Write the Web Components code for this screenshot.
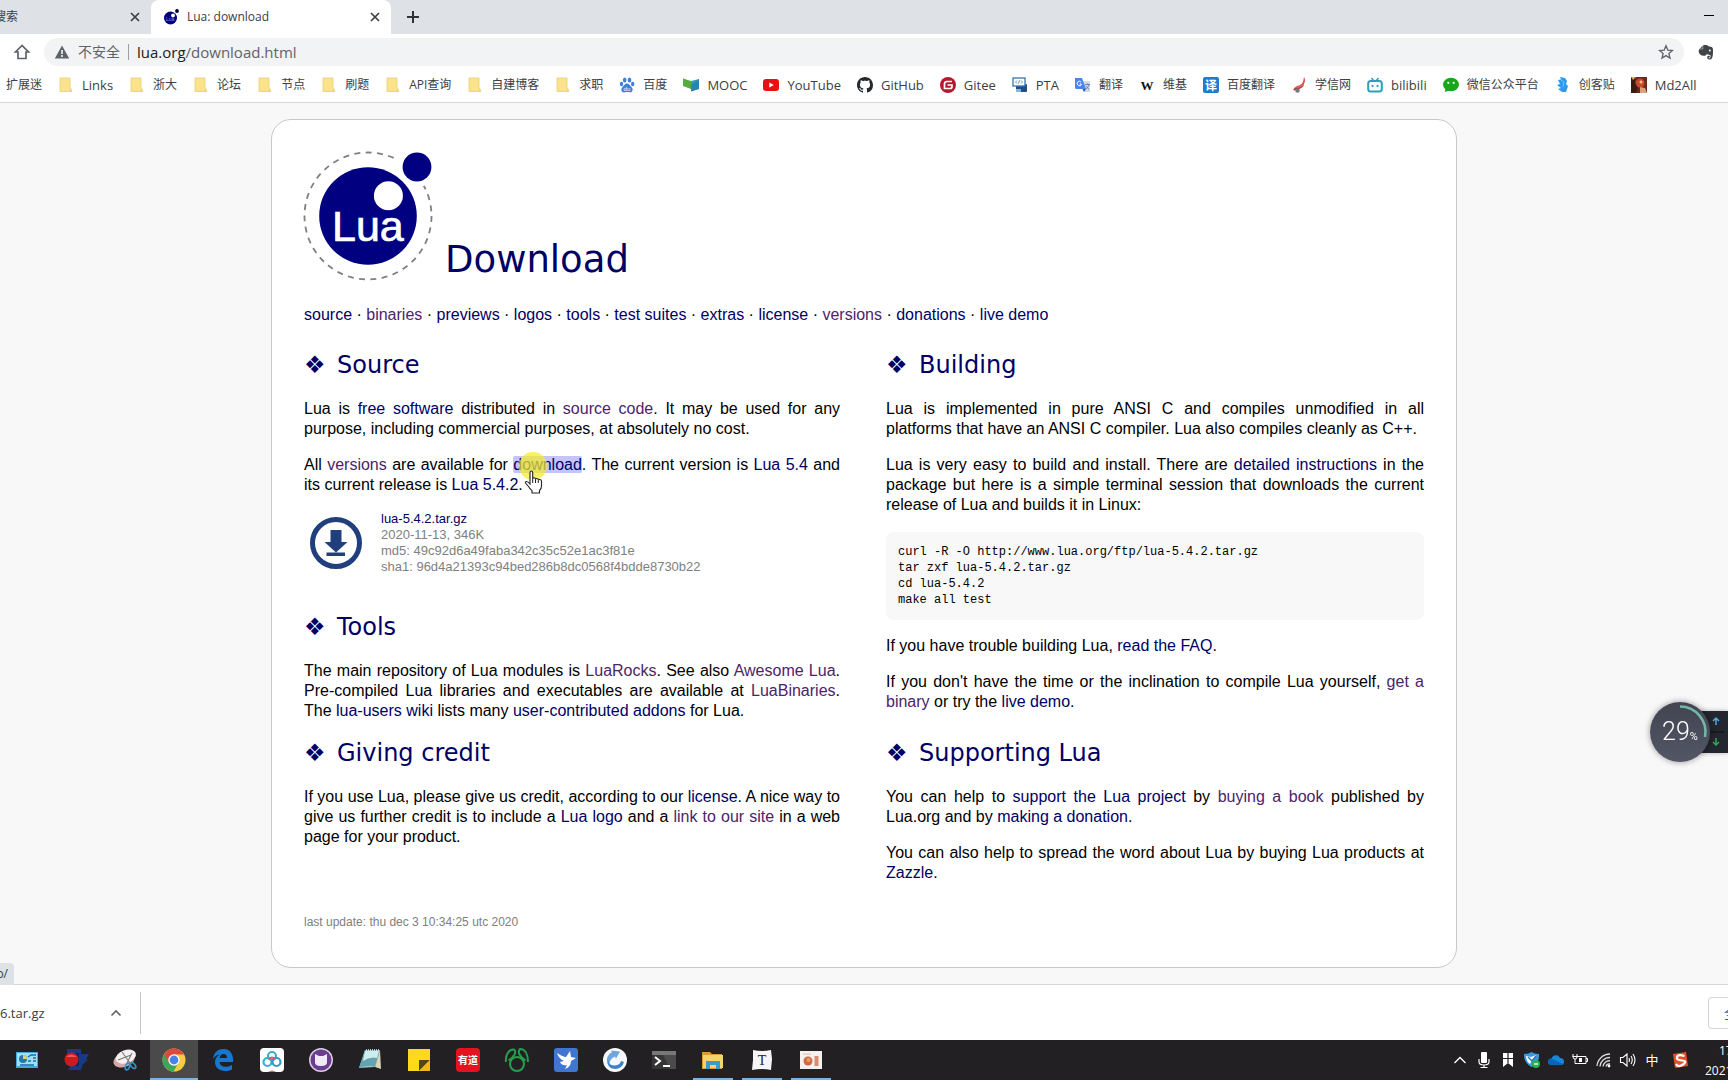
<!DOCTYPE html>
<html lang="zh-CN">
<head>
<meta charset="utf-8">
<title>Lua: download</title>
<style>
  body {
    margin: 0;
    min-height: 100vh;
    display: flex;
    flex-direction: column;
    overflow: hidden;
    background: #fff;
    color: #3c4043;
    font: 12px/16px "Open Sans", "Noto Sans CJK SC", sans-serif;
  }
  lua-page { flex: 1; }
</style>
</head>
<body>
<tab-strip></tab-strip>
<address-bar></address-bar>
<bookmarks-bar></bookmarks-bar>
<lua-page></lua-page>
<download-shelf></download-shelf>
<task-bar></task-bar>
<speed-ball></speed-ball>

<script>
const ICONS = {
  close: '<path d="M4 4l8 8M12 4l-8 8" stroke="#3c4043" stroke-width="1.7"/>',
  plus: '<path d="M8 2v12M2 8h12" stroke="#303336" stroke-width="2"/>',
  minimize: '<path d="M3 6.500h10" stroke="#000"/>',
  lua: '<circle cx="7.500" cy="9" r="6.500" fill="#000080"/><circle cx="10" cy="6.500" r="1.900" fill="#fff"/><circle cx="14" cy="2" r="1.900" fill="#000030"/><text x="3" y="12" font-size="5" fill="#99c" font-family="Liberation Sans">Lua</text>',
  home: '<path d="M8 1.500L1.500 8H4v6.500h8V8h2.500z" fill="none" stroke="#5f6368" stroke-width="1.700"/>',
  warn: '<path d="M8 1.500L15.200 14.500H.8z" fill="#5f6368"/><path d="M8 6v4M8 11v2" stroke="#fff" stroke-width="1.500"/>',
  star: '<path d="M8 1.800l1.800 4.300 4.600.4-3.500 3 1.100 4.600L8 11.600l-4 2.500 1.100-4.600-3.500-3 4.600-.4z" fill="none" stroke="#5f6368" stroke-width="1.300"/>',
  evernote: '<path d="M1 5.500L5 1.500c3-1 5 0 6 1 3 0 4 1 4 3.500 0 4 0 9-2.500 9.500-2 .3-3.500-.5-3.300-2.200.2-1.500 1.800-1.700 2.600-1.300v1.200c-.9-.1-1.300.2-1.200.8.2.6 1.200.5 1.600-.2.500-1 .4-2.500 0-3-1 .5-2.500 0-3.200-1-.8 1.800-2 2.200-3.500 2C2 11.400 0 9 1 5.500z" fill="#404447"/><path d="M4.800 2v3H1.500" stroke="#f1f3f4" stroke-width=".5" fill="none"/><circle cx="11.800" cy="6.500" r=".9" fill="#fff"/>',
  folder: '<path d="M2 1h10v9l2 4.500H2z" fill="#fbe38e" stroke="#e8ce74" stroke-width=".8"/><path d="M11 14.500l1.500-4 1.500 4z" fill="#f4d775"/>',
  baidu: '<g fill="#3b82e0"><ellipse cx="5.700" cy="3" rx="1.800" ry="2.500"/><ellipse cx="10.500" cy="3" rx="1.800" ry="2.500"/><ellipse cx="2.500" cy="7" rx="1.700" ry="2.200"/><ellipse cx="13.700" cy="7" rx="1.700" ry="2.200"/><path d="M8 6.500c2 0 3 2 4.500 3.500 2.300 2.300.8 5.500-1.500 5.500-1.200 0-1.800-.4-3-.4s-1.800.4-3 .4c-2.300 0-3.800-3.200-1.500-5.500C5 8.500 6 6.500 8 6.500z"/></g><text x="4.600" y="14" font-size="6" fill="#fff" font-family="Liberation Sans">du</text>',
  mooc: '<path d="M0 1.500l8 2.500v8l-8-3z" fill="#53ad3c"/><path d="M8 4l8-2v10l-8 2.500z" fill="#3a9bc0"/><path d="M8 8l8-6v10l-8 2.500z" fill="#25759d" opacity=".6"/>',
  youtube: '<rect y="2" width="16" height="12" rx="3" fill="#e81010"/><path d="M6.300 5.500v5l4.500-2.500z" fill="#fff"/>',
  github: '<path fill="#24292e" d="M8 0C3.580 0 0 3.580 0 8c0 3.540 2.290 6.530 5.470 7.590.4.07.55-.17.55-.38 0-.19-.01-.82-.01-1.490-2.010.37-2.530-.49-2.690-.94-.09-.23-.48-.94-.82-1.130-.28-.15-.68-.52-.01-.53.63-.01 1.080.58 1.230.82.72 1.210 1.870.87 2.330.66.07-.52.28-.87.51-1.070-1.780-.2-3.640-.89-3.640-3.950 0-.87.31-1.590.82-2.150-.08-.2-.36-1.020.08-2.120 0 0 .67-.21 2.200.82.64-.18 1.320-.27 2-.27s1.360.09 2 .27c1.530-1.040 2.200-.82 2.200-.82.44 1.100.16 1.920.08 2.120.51.56.82 1.270.82 2.150 0 3.070-1.870 3.750-3.650 3.950.29.25.54.73.54 1.480 0 1.070-.01 1.930-.01 2.200 0 .21.15.46.55.38A8.010 8.010 0 0016 8c0-4.420-3.580-8-8-8z"/>',
  gitee: '<circle cx="8" cy="8" r="8" fill="#b5192f"/><path d="M12 4.500H7Q4.500 4.500 4.500 7v4.500H10Q12 11.500 12 9.500V8H7.500" stroke="#fff" stroke-width="1.700" fill="none"/>',
  pta: '<rect x="4" y="7" width="11" height="8" rx="1" fill="#1f4f8a"/><rect x="1" y="1" width="12" height="8" fill="#fff" stroke="#3b74a8" stroke-width="1.300"/><path d="M5 3.500L3.500 5 5 6.500M9 3.500L10.500 5 9 6.500M7.500 3.300l-1 3.400" stroke="#3b74a8" fill="none" stroke-width=".8"/><path d="M4 12h5v3H4z" fill="#8db4d6"/>',
  gtranslate: '<path d="M6 4h9v11H9z" fill="#d8dce2"/><path d="M0 1h7l4 11H1.500Q0 12 0 10.500z" fill="#4a86e8"/><path d="M7.500 12H11l-2 3z" fill="#2a56c6"/><path d="M6 5A2.200 2.200 0 1 0 6.500 7H4.700" stroke="#fff" stroke-width="1" fill="none"/><path d="M10 7.500h5M12.500 6.500v1M14 7.500c-.5 2.500-2 4-3.500 5M11.300 9c1 1.800 2 2.700 3 3.300" stroke="#5b7db5" stroke-width=".9" fill="none"/>',
  wiki: '<text x="8" y="13" text-anchor="middle" font-size="13" font-weight="bold" fill="#111" font-family="Liberation Serif">W</text>',
  fanyi: '<rect width="16" height="16" rx="2" fill="#1f7bd0"/><text x="8" y="12.500" text-anchor="middle" font-size="12" font-weight="bold" fill="#fff" font-family="Noto Sans CJK SC">译</text>',
  chsi: '<path d="M13 0c2 3 1 6-1 8-2 2-5 2-9 6-1-4 3-5 6-6 2.500-1 3-3 4-8z" fill="#e05a52"/><path d="M13 5c0 4-3 5-11 7l1 1c4-1 11-1 10-8z" fill="#b62f38"/><circle cx="6.500" cy="13.500" r="2.200" fill="#777"/>',
  bilibili: '<rect x="1.200" y="4" width="13.600" height="10.500" rx="2.500" fill="none" stroke="#2d9fb8" stroke-width="2"/><path d="M4.500 1l2 2.500M11.500 1l-2 2.500" stroke="#2d9fb8" stroke-width="1.500"/><path d="M5.500 8v2M10.500 8v2" stroke="#2d9fb8" stroke-width="1.800"/>',
  wechat: '<ellipse cx="8" cy="7.500" rx="8" ry="6.800" fill="#17a81a"/><path d="M2.500 11L2 15l4-1.500z" fill="#17a81a"/><circle cx="5.300" cy="5.800" r="1.100" fill="#fff"/><circle cx="10.700" cy="5.800" r="1.100" fill="#fff"/>',
  ckt: '<path d="M5 0l5 1 2 3-1 3 2 2-2 6H7l-4-3 3-1-4-3 3-1-2-4 3-.5z" fill="#2b9af0"/><path d="M6 3l3 2-1 5" stroke="#74c3ff" fill="none"/>',
  md: '<path d="M0 0h16v16H0z" fill="#6a2a1c"/><circle cx="9" cy="6" r="4.500" fill="#c94a2a"/><path d="M0 0h4v6l3 5-2 5H0z" fill="#3a1c14"/><path d="M9 10l5 1 2 5H9z" fill="#d8a27a"/><circle cx="10" cy="5" r="1.500" fill="#f0c0a0"/><path d="M0 0h5l-3 3z" fill="#d3b23a"/>',
  up: '<path d="M3.500 10.500L8 6l4.500 4.500" fill="none" stroke="#5f6368" stroke-width="1.600"/>',

  panel: '<rect x="1" y="4" width="22" height="16" fill="#41a9dc"/><rect x="2" y="5" width="20" height="13" fill="#9fe0f8"/><circle cx="8" cy="11" r="4" fill="#2578b5"/><path d="M8 11V7a4 4 0 0 1 4 4z" fill="#e7ce68"/><path d="M13 9l3-2h5M13 13h3M18 10h3M18 13h3M5 17h14" stroke="#1a6ca8" stroke-width="1.500" fill="none"/>',
  recorder: '<path d="M3 1h14v5h8l-3 5 2 1-5 4-2 6H4l3-5H2V7h1z" fill="#183a86"/><path d="M5 5h10v13H5z" fill="#0d2460"/><circle cx="7.500" cy="11.500" r="7" fill="#c81c20"/><path d="M2 9q5-5 11 0z" fill="#ea5b55"/>',
  snip: '<ellipse cx="11" cy="12" rx="11" ry="7" transform="rotate(-20 11 12)" fill="#d8a9a8"/><ellipse cx="13" cy="8.500" rx="10.500" ry="6.500" transform="rotate(-20 13 9)" fill="#f6efef"/><path d="M9 4l8 11M19 5l-5 10M5 12l13-5" stroke="#777" stroke-width="1.100"/><ellipse cx="14.500" cy="18.500" rx="2" ry="3.500" transform="rotate(20 14.500 18.500)" fill="none" stroke="#398fbd" stroke-width="1.700"/><ellipse cx="20" cy="17.500" rx="2" ry="3.500" transform="rotate(-40 20 17.500)" fill="none" stroke="#398fbd" stroke-width="1.700"/>',
  chrome: '<circle cx="12" cy="12" r="11.500" fill="#f7cb42"/><path d="M2 6.200A11.500 11.500 0 0 0 11.500 23.500l5-9L12 12z" fill="#3da55c"/><path d="M2 6.200A11.500 11.500 0 0 1 22.100 6.500H12l-5 8z" fill="#dc4a3d"/><circle cx="12" cy="12" r="5.700" fill="#fff"/><circle cx="12" cy="12" r="4.400" fill="#4a82e8"/>',
  edge: '<path d="M2 11C3 4 7 1 12.500 1 19 1 22 6 22 11v3H8.500c.3 3 2.500 4.800 6 4.800 2.500 0 4.500-.6 6.500-1.800v4.500C19 22.600 16.500 23 14 23 8 23 4 19.500 4 14c0-3.500 2-6.200 5-7.500C5.500 7 3.300 8.800 2 11zm6.600-1H16c0-2.500-1-4-3.500-4-2.300 0-3.600 1.700-3.900 4z" fill="#1876ce"/>',
  netdisk: '<rect width="24" height="24" rx="4" fill="#fff"/><circle cx="12" cy="8" r="4" fill="none" stroke="#38afd0" stroke-width="2.200"/><circle cx="7.500" cy="14" r="4" fill="none" stroke="#38afd0" stroke-width="2.200"/><circle cx="16.500" cy="14" r="4" fill="none" stroke="#2d9ac5" stroke-width="2.200"/><path d="M9 11.500q3-4 6 0" fill="none" stroke="#df5268" stroke-width="2.200"/><path d="M8 24q4-3 8 0z" fill="#e85a68"/>',
  githubdesk: '<circle cx="12" cy="12" r="12" fill="#d9cde4"/><circle cx="12" cy="12" r="10.500" fill="#6a3d91"/><path d="M6 6l4 2h4l4-2v7q1 5-6 5t-6-5z" fill="#f2e9f8"/>',
  notepad: '<path d="M7 2h15l-5 17-16 1z" fill="#8fc8d2"/><path d="M7 2h15l-5 17q-6-3-16 1z" fill="#65a3ae"/><path d="M7 3h14l-2 7q-7-2-14 3z" fill="#cdeef0"/><path d="M22 2l1 19-6-2z" fill="#d8d5bb"/><path d="M8 2h14" stroke="#eee" stroke-width="1.500" stroke-dasharray="1 1"/>',
  sticky: '<path d="M1 1h22v22H1z" fill="#ffd91c"/><path d="M12 23V12h11z" fill="#51451a"/><path d="M12 23l11-11v11z" fill="#f0b913"/>',
  youdao: '<rect width="24" height="24" rx="4" fill="#e5121f"/><text x="12" y="16" text-anchor="middle" font-size="10" font-weight="bold" fill="#fff" font-family="Noto Sans CJK SC">有道</text>',
  clover: '<g fill="none" stroke="#25a04c" stroke-width="2"><circle cx="12" cy="16" r="7"/><path d="M1 14C0 7 4 1 9 1.500 12 4 9 9 3.500 12.500M23 14C23 6 20 1 15 1c-3 3 0 8 5.500 11.500"/></g>',
  bird: '<rect width="24" height="24" rx="3" fill="#3f76d2"/><path d="M3 5q6 4 9 4L16 3l1 6 5 1-5 3q0 6-6 8l2-4q-5 1-7-3l4-1Q5 11 3 5z" fill="#fff"/>',
  swirl: '<circle cx="12" cy="12" r="12" fill="#f5f8fc"/><path d="M4.500 16Q2 8 9 4l-1-1.500 9 1-4 7-1-2Q6 11 6.500 17z" fill="#6fa6df"/><path d="M5 11q0 7 7 6.500 5-.5 6-4.500l3 1q-2 7-9 7-9-.5-7-10z" fill="#3c80c8"/>',
  terminal: '<path d="M0 3h24v18H0z" fill="#353535"/><path d="M0 3h24v4H0z" fill="#777"/><path d="M11 7h13v14H18z" fill="#4b4b4b"/><path d="M3 9l5 4-5 4M11 18h7" stroke="#fff" stroke-width="2" fill="none"/>',
  explorer: '<path d="M1 4h8l2 2h10v15H1z" fill="#d99b2b"/><path d="M2 7h20v13H2z" fill="#f7d36d"/><path d="M5 13h14v8h-4v-4H9v4H5z" fill="#3d9bc8"/>',
  typora: '<path d="M3 2q9 2 18 0l1 9-1 11q-9-2-19 0l1-10z" fill="#f6f6f6"/><text x="12" y="17" text-anchor="middle" font-size="14" fill="#222" font-family="Liberation Serif">T</text>',
  ppt: '<path d="M1 3h22v18H1z" fill="#f5f1ef"/><circle cx="9" cy="13" r="4.500" fill="#d06a48"/><circle cx="9.500" cy="12" r="2" fill="#e8a24f"/><path d="M15.500 8h4v10h-4z" fill="#d98d70"/><path d="M4 6h8" stroke="#ddbbb0"/>',

  trayup: '<path d="M2.500 11L8 5.500l5.500 5.500" fill="none" stroke="#fff" stroke-width="1.300"/>',
  mic: '<rect x="5" y="0" width="6" height="11" rx="1" fill="#fff"/><path d="M3 7v3q0 3 5 3t5-3V7M8 13v2.500M4.500 15.500h7" fill="none" stroke="#fff" stroke-width="1.200"/>',
  flag: '<path d="M3 1h10v14l-5-4-5 4z" fill="#fff"/><path d="M8 0v11M2 6.500h12" stroke="#222022" stroke-width="1.200"/>',
  shield: '<path d="M0 2q5 0 7.500-2 3 2 7.500 2 1 9-7.500 13Q-.5 11 0 2z" fill="#3a9ad9"/><path d="M2 4l5 1 5-2q-1 3-4 5l-2 4Q2 9 2 4z" fill="#fff"/><path d="M4 5l4 4 4-5" stroke="#2a77c8" fill="none" stroke-width="1.500"/><circle cx="12" cy="12" r="4" fill="#27b34b"/><path d="M10 12h4" stroke="#fff" stroke-width="1.300"/>',
  cloud: '<path d="M3 13q-3-.5-3-3.500Q.5 6.500 3.500 6.500 5 3 8.500 3.300 11 3.500 12 6q4 0 4 3.500T13 13z" fill="#1687d9"/><path d="M3 6.500L15 12q-1 1-2 1H3q-3-.5-3-3.500Q.5 6.500 3 6.500z" fill="#0866b8"/>',
  battery: '<path d="M4.500 4.500H14v7H5.500M14 6.500h1.500v3H14M1 2v3q0 2 2 2t2-2V2M.5 4.500h5M3 7v4.500h2.500" fill="none" stroke="#fff"/><path d="M7 6h3v4H7z" fill="#fff"/>',
  wifi: '<g fill="none" stroke="#ddd" stroke-width="1.300"><path d="M1 14A13 13 0 0 1 14 2"/><path d="M4 14.500A9.500 9.500 0 0 1 14 5.500"/><path d="M7 14.500A6.500 6.500 0 0 1 14 8.800"/><path d="M10 14.500A3.500 3.500 0 0 1 14 12"/></g><circle cx="13" cy="14" r="1.400" fill="#fff"/>',
  volume: '<g fill="none" stroke="#fff" stroke-width="1.100"><path d="M.5 5.500H3l4-3.500v12l-4-3.500H.5zM9 6q1 2 0 4M11 4q2.500 4 0 8M13 2q4 6 0 12"/></g>',
  ime: '<text x="8" y="12.500" text-anchor="middle" font-size="13" fill="#fff" font-family="Noto Sans CJK SC">中</text>',
  sogou: '<path d="M1 2l13-2 2 14-13 2z" fill="#e3512c"/><path d="M12.500 4Q6 2 5 5t5 3.500 1 4-7-.5" fill="none" stroke="#fff" stroke-width="2.200"/>'
};

class UiIcon extends HTMLElement {
  connectedCallback() {
    const box = this.hasAttribute('large') ? 24 : 16;
    if (!this.shadowRoot) this.attachShadow({mode: 'open'});
    this.shadowRoot.innerHTML = `
<style>
  :host { display: block; flex: none; width: ${box}px; height: ${box}px; }
  svg { display: block; width: 100%; height: 100%; overflow: visible; }
</style>
<svg viewBox="0 0 ${box} ${box}" aria-hidden="true">${ICONS[this.getAttribute('name')]}</svg>
`;
  }
}
customElements.define('ui-icon', UiIcon);

class TabStrip extends HTMLElement {
  constructor() {
    super();
    this.attachShadow({mode: 'open'}).innerHTML = `
<style>
  :host { display: flex; height: 34px; background: #dee1e6; align-items: stretch; }
  .tab { display: flex; align-items: center; box-sizing: border-box; padding-right: 8px; }
  .old { width: 151px; justify-content: space-between; }
  .clip { width: 18px; display: flex; justify-content: flex-end; overflow: hidden; white-space: nowrap; }
  .active { width: 240px; padding-left: 12px; gap: 8px; background: #fff; border-radius: 8px 8px 0 0; }
  .active span { flex: 1; }
  button { border: 0; padding: 0; background: none; display: flex; align-items: center; justify-content: center; }
  .add { width: 44px; }
  .min { margin-left: auto; width: 38px; }
  .tab button { width: 16px; }
</style>
<div class="tab old"><span class="clip">搜索</span><button aria-label="关闭"><ui-icon name="close"></ui-icon></button></div>
<div class="tab active"><ui-icon name="lua"></ui-icon><span>Lua: download</span><button aria-label="关闭"><ui-icon name="close"></ui-icon></button></div>
<button class="add" aria-label="新标签页"><ui-icon name="plus"></ui-icon></button>
<button class="min" aria-label="最小化"><ui-icon name="minimize"></ui-icon></button>
`;
  }
}
customElements.define('tab-strip', TabStrip);

class AddressBar extends HTMLElement {
  constructor() {
    super();
    this.attachShadow({mode: 'open'}).innerHTML = `
<style>
  :host { display: flex; align-items: center; height: 36px; }
  button { border: 0; padding: 0; background: none; display: flex; justify-content: center; }
  .home, .ext { width: 44px; }
  .box { flex: 1; display: flex; align-items: center; gap: 8px; height: 28px; padding: 0 10px; border-radius: 14px; background: #f1f3f4; }
  .state { font-size: 14px; color: #5f6368; padding-right: 8px; border-right: 1px solid #9aa0a6; }
  .url { flex: 1; font-size: 15px; color: #5f6368; }
  .url b { font-weight: normal; color: #202124; }
</style>
<button class="home" aria-label="主页"><ui-icon name="home"></ui-icon></button>
<div class="box">
  <ui-icon name="warn"></ui-icon>
  <span class="state">不安全</span>
  <span class="url"><b>lua.org</b>/download.html</span>
  <button aria-label="收藏"><ui-icon name="star"></ui-icon></button>
</div>
<button class="ext" aria-label="印象笔记"><ui-icon name="evernote"></ui-icon></button>
`;
  }
}
customElements.define('address-bar', AddressBar);

class BookmarkItem extends HTMLElement {
  connectedCallback() {
    const icon = this.getAttribute('icon');
    this.attachShadow({mode: 'open'}).innerHTML = `
<style>
  :host { display: block; flex: none; }
  a { display: flex; align-items: center; gap: 8px; color: inherit; text-decoration: none; white-space: nowrap; }
</style>
<a href="#">${icon ? `<ui-icon name="${icon}"></ui-icon>` : ''}<slot></slot></a>
`;
  }
}
customElements.define('bookmark-item', BookmarkItem);

class BookmarksBar extends HTMLElement {
  constructor() {
    super();
    const items = [
      ['', '扩展迷'], ['folder', 'Links'], ['folder', '浙大'], ['folder', '论坛'], ['folder', '节点'],
      ['folder', '刷题'], ['folder', 'API查询'], ['folder', '自建博客'], ['folder', '求职'],
      ['baidu', '百度'], ['mooc', 'MOOC'], ['youtube', 'YouTube'], ['github', 'GitHub'],
      ['gitee', 'Gitee'], ['pta', 'PTA'], ['gtranslate', '翻译'], ['wiki', '维基'],
      ['fanyi', '百度翻译'], ['chsi', '学信网'], ['bilibili', 'bilibili'],
      ['wechat', '微信公众平台'], ['ckt', '创客贴'], ['md', 'Md2All']
    ];
    this.attachShadow({mode: 'open'}).innerHTML = `
<style>
  :host { display: flex; align-items: center; gap: 16px; height: 30px; padding: 0 0 2px 6px; border-bottom: 1px solid #d5d7da; }
  bookmark-item:first-child { margin-right: 8px; }
  .latin { font-size: 13px; }
</style>
${items.map(([icon, text]) => `<bookmark-item icon="${icon}" class="${/^\w+$/.test(text) ? 'latin' : ''}">${text}</bookmark-item>`).join('')}
`;
  }
}
customElements.define('bookmarks-bar', BookmarksBar);

class LuaLogo extends HTMLElement {
  constructor() {
    super();
    this.attachShadow({mode: 'open'}).innerHTML = `
<style>
  :host { display: block; width: 128px; height: 128px; }
  svg { display: block; overflow: visible; }
</style>
<svg width="128" height="128" viewBox="0 0 128 128" role="img" aria-label="Lua">
  <circle cx="64" cy="64" r="63.500" fill="none" stroke="#808080" stroke-width="1.800" stroke-dasharray="6 5.400"/>
  <circle cx="113" cy="15" r="20" fill="#fff"/>
  <circle cx="64" cy="64" r="48.800" fill="#000080"/>
  <circle cx="84.400" cy="43.700" r="14.500" fill="#fff"/>
  <circle cx="113" cy="15" r="14.400" fill="#000080"/>
  <text x="28" y="88.500" font-size="43" fill="#fff" stroke="#fff" stroke-width=".7" font-family="Liberation Sans, Arial, sans-serif">Lua</text>
</svg>
`;
  }
}
customElements.define('lua-logo', LuaLogo);

class LuaSection extends HTMLElement {
  connectedCallback() {
    this.attachShadow({mode: 'open'}).innerHTML = `
<style>
  :host { display: block; }
  h2 { display: flex; gap: 12px; margin: 0 0 20px; color: #000064; font: 24px/28px "DejaVu Sans", Verdana, sans-serif; }
  h2 span { width: 21px; text-align: center; }
</style>
<h2><span>❖</span>${this.getAttribute('heading')}</h2>
<slot></slot>
`;
  }
}
customElements.define('lua-section', LuaSection);

class HandPointer extends HTMLElement {
  constructor() {
    super();
    this.attachShadow({mode: 'open'}).innerHTML = `
<style>
  :host { position: absolute; left: 6px; top: -4px; width: 28px; height: 42px; pointer-events: none; }
  .spot { width: 28px; height: 28px; border-radius: 50%; background: #f4ec28b8; }
  svg { position: absolute; left: 5px; top: 18px; }
</style>
<div class="spot"></div>
<svg width="20" height="24" viewBox="0 0 20 24"><path d="M6 14V2.500q0-1.500 1.300-1.500T8.700 2.500V9q0-1.300 1.400-1.300T11.500 9v.7q0-1.200 1.400-1.200t1.400 1.200v.8q.2-1 1.500-1t1.700 1.400V16q0 3-2 4.500V23H8v-2.300Q6 19 4.500 16.500L1.500 13Q1 11.500 2.500 11.500T6 14z" fill="#fff" stroke="#222" stroke-width="1.100"/><path d="M8.700 9v4M11.500 9.500V13M14.300 10.500V13" stroke="#222"/></svg>
`;
  }
}
customElements.define('hand-pointer', HandPointer);

class LuaPage extends HTMLElement {
  constructor() {
    super();
    this.attachShadow({mode: 'open'}).innerHTML = `
<style>
  :host { display: block; box-sizing: border-box; padding: 16px; background: #f8f8f8; color: #000; font: 16px/20px "Liberation Sans", Helvetica, Arial, sans-serif; }
  main { max-width: 1120px; margin: 0 auto; padding: 32px 32px 37px; border: 1px solid #c8c8c8; border-radius: 20px; background: #fff; }
  header { display: flex; align-items: flex-end; gap: 13px; }
  h1 { margin: 0; color: #000064; font: 37px/40px "DejaVu Sans", Verdana, sans-serif; }
  a { color: #000064; text-decoration: none; }
  a.seen { color: #4c2468; }
  nav { margin: 25px 0 26px; }
  .grid { display: grid; grid-template-columns: calc(50% - 24px) 1fr; gap: 18px 46px; }
  p { margin: 0 0 16px; text-align: justify; }
  p:last-child { margin-bottom: 0; }
  .here { position: relative; background: #c4c4fb; border-radius: 2px; }
  .file { display: flex; align-items: center; gap: 19px; margin-bottom: 38px; padding-left: 6px; color: #808080; font-size: 13px; line-height: 16px; }
  .file svg { flex: none; }
  pre { margin: 17px 0 16px; padding: 12px; border-radius: 8px; background: #f8f8f8; font: 12px/16px "Liberation Mono", monospace; }
  footer { margin-top: 31px; color: #808080; font-size: 12px; line-height: 16px; }
</style>
<main>
  <header><lua-logo></lua-logo><h1>Download</h1></header>
  <nav>
    <a href="#">source</a> · <a href="#" class="seen">binaries</a> · <a href="#">previews</a> · <a href="#">logos</a> ·
    <a href="#">tools</a> · <a href="#">test suites</a> · <a href="#">extras</a> · <a href="#">license</a> ·
    <a href="#" class="seen">versions</a> · <a href="#">donations</a> · <a href="#">live demo</a>
  </nav>
  <div class="grid">
    <div>
      <lua-section heading="Source">
        <p>Lua is <a href="#">free software</a> distributed in <a href="#" class="seen">source code</a>. It may be used for any purpose, including commercial purposes, at absolutely no cost.</p>
        <p>All <a href="#" class="seen">versions</a> are available for <a href="#" class="here">download<hand-pointer></hand-pointer></a>. The current version is <a href="#">Lua 5.4</a> and its current release is <a href="#">Lua 5.4.2</a>.</p>
        <div class="file">
          <svg width="52" height="52" viewBox="0 0 52 52" aria-hidden="true"><circle cx="26" cy="26" r="23.500" fill="none" stroke="#213f7d" stroke-width="5"/><path d="M20.500 13h11v12h6L26 35.500 14.500 25h6zM16.500 35.500h18.500v3.500H16.500z" fill="#213f7d"/></svg>
          <div><a href="#">lua-5.4.2.tar.gz</a><br>2020-11-13, 346K<br>md5: 49c92d6a49faba342c35c52e1ac3f81e<br>sha1: 96d4a21393c94bed286b8dc0568f4bdde8730b22</div>
        </div>
      </lua-section>
      <lua-section heading="Tools">
        <p>The main repository of Lua modules is <a href="#" class="seen">LuaRocks</a>. See also <a href="#" class="seen">Awesome Lua</a>. Pre-compiled Lua libraries and executables are available at <a href="#" class="seen">LuaBinaries</a>. The <a href="#">lua-users wiki</a> lists many <a href="#">user-contributed addons</a> for Lua.</p>
      </lua-section>
    </div>
    <lua-section heading="Building">
      <p>Lua is implemented in pure ANSI C and compiles unmodified in all platforms that have an ANSI C compiler. Lua also compiles cleanly as C++.</p>
      <p>Lua is very easy to build and install. There are <a href="#">detailed instructions</a> in the package but here is a simple terminal session that downloads the current release of Lua and builds it in Linux:</p>
      <pre>curl -R -O http://www.lua.org/ftp/lua-5.4.2.tar.gz
tar zxf lua-5.4.2.tar.gz
cd lua-5.4.2
make all test</pre>
      <p>If you have trouble building Lua, <a href="#">read the FAQ</a>.</p>
      <p>If you don't have the time or the inclination to compile Lua yourself, <a href="#" class="seen">get a binary</a> or try the <a href="#">live demo</a>.</p>
    </lua-section>
    <lua-section heading="Giving credit">
      <p>If you use Lua, please give us credit, according to our <a href="#">license</a>. A nice way to give us further credit is to include a <a href="#">Lua logo</a> and a <a href="#" class="seen">link to our site</a> in a web page for your product.</p>
    </lua-section>
    <lua-section heading="Supporting Lua">
      <p>You can help to <a href="#">support the Lua project</a> by <a href="#" class="seen">buying a book</a> published by Lua.org and by <a href="#">making a donation</a>.</p>
      <p>You can also help to spread the word about Lua by buying Lua products at <a href="#">Zazzle</a>.</p>
    </lua-section>
  </div>
  <footer>last update: thu dec 3 10:34:25 utc 2020</footer>
</main>
`;
  }
}
customElements.define('lua-page', LuaPage);

class DownloadShelf extends HTMLElement {
  constructor() {
    super();
    this.attachShadow({mode: 'open'}).innerHTML = `
<style>
  :host { position: relative; display: flex; align-items: center; height: 55px; border-top: 1px solid #d5d7da; font-size: 13px; }
  .item { display: flex; align-items: center; justify-content: space-between; box-sizing: border-box; width: 141px; height: 42px; padding-right: 16px; border-right: 1px solid #c4c6c9; }
  button { padding: 0; border: 0; background: none; color: inherit; font: inherit; }
  .all { flex: none; margin-left: auto; width: 20px; height: 32px; padding-left: 15px; border: 1px solid #d5d7da; border-right: 0; border-radius: 4px 0 0 4px; color: #1a5fb4; overflow: hidden; text-align: left; white-space: nowrap; }
  .status { position: absolute; left: 0; bottom: 100%; width: 14px; height: 22px; box-sizing: border-box; display: flex; align-items: center; justify-content: flex-end; overflow: hidden; border-radius: 0 4px 0 0; background: #dee1e6; border-right: 6px solid #dee1e6; font-size: 12px; }
</style>
<div class="status">o/</div>
<div class="item"><span>6.tar.gz</span><button aria-label="更多"><ui-icon name="up"></ui-icon></button></div>
<button class="all">全</button>
`;
  }
}
customElements.define('download-shelf', DownloadShelf);

class TaskBar extends HTMLElement {
  constructor() {
    super();
    const apps = ['panel', 'recorder', 'snip', 'chrome', 'edge', 'netdisk', 'githubdesk', 'notepad', 'sticky',
      'youdao', 'clover', 'bird', 'swirl', 'terminal', 'explorer', 'typora', 'ppt'];
    const running = ['explorer', 'typora', 'ppt'];
    const tray = ['trayup', 'mic', 'flag', 'shield', 'cloud', 'battery', 'wifi', 'volume', 'ime', 'sogou'];
    this.attachShadow({mode: 'open'}).innerHTML = `
<style>
  :host { display: flex; height: 40px; padding-left: 3px; background: #222022; color: #fff; overflow: hidden; }
  button { flex: none; display: flex; align-items: center; justify-content: center; box-sizing: border-box; width: 48px; margin-right: 1px; padding: 2px 0 0; border: 0; border-bottom: 2px solid transparent; background: none; }
  .active { background: #4b4a4b; border-color: #7cb3e6; }
  .running { width: 40px; margin: 0 5px 0 4px; border-color: #7cb3e6; }
  .tray { display: flex; margin-left: auto; }
  .tray button { width: 24px; margin: 0; }
  .tray button:last-child { width: 32px; }
  .clock { flex: none; box-sizing: border-box; width: 32px; padding: 1px 0 0 9px; line-height: 20px; white-space: nowrap; }
  .time { padding-left: 14px; }
</style>
${apps.map(n => `<button aria-label="${n}" class="${n === 'chrome' ? 'active' : running.includes(n) ? 'running' : ''}"><ui-icon large name="${n}"></ui-icon></button>`).join('')}
<div class="tray">${tray.map(n => `<button aria-label="${n}"><ui-icon name="${n}"></ui-icon></button>`).join('')}</div>
<div class="clock"><div class="time">17</div><div>2021</div></div>
`;
  }
}
customElements.define('task-bar', TaskBar);

class SpeedBall extends HTMLElement {
  constructor() {
    super();
    this.attachShadow({mode: 'open'}).innerHTML = `
<style>
  :host { position: fixed; right: 0; top: 702px; width: 78px; height: 60px; display: flex; align-items: center; }
  .side { margin-left: auto; width: 30px; height: 42px; background: #242630; box-shadow: 0 0 5px #0004; }
  .side svg { display: block; margin-left: 12px; }
  .ball { position: absolute; left: 0; top: 0; box-sizing: border-box; width: 60px; height: 60px; display: flex; align-items: baseline; justify-content: center; padding-top: 16px; border-radius: 50%; background: linear-gradient(#424452, #535665); box-shadow: 0 0 6px #0006; color: #fff; font: 300 25px/28px Roboto, sans-serif; }
  .ball small { font-size: 11px; font-weight: 400; }
  .ring { position: absolute; left: 0; top: 0; }
</style>
<div class="side"><svg width="14" height="42" viewBox="0 0 14 42" fill="none" stroke-width="1.500"><path d="M6 14V7M3 10l3-3 3 3" stroke="#55a8dc"/><path d="M6 27v7M3 31l3 3 3-3" stroke="#35a852"/><path d="M0 21h14" stroke="#15171e"/></svg></div>
<div class="ball">29<small>%</small>
  <svg class="ring" width="60" height="60" viewBox="0 0 60 60"><path d="M30 4.500A25.500 25.500 0 0 1 55 35" fill="none" stroke="#74b8a8" stroke-width="2.500"/></svg>
</div>
`;
  }
}
customElements.define('speed-ball', SpeedBall);
</script>
</body>
</html>
